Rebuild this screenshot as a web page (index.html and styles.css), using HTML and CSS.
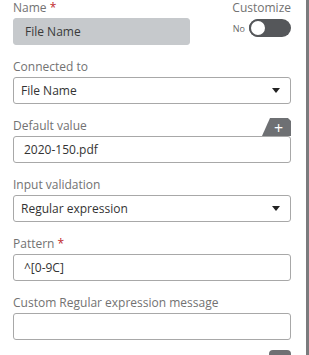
FILE: index.html
```html
<!DOCTYPE html>
<html lang="en">
<head>
  <meta charset="UTF-8" />
  <title>Field settings</title>
  <link rel="stylesheet" href="styles.css">
</head>
<body>
  <div class="panel">
    <div class="form">
      <div class="top-row">
        <div class="name-group">
          <div class="label">Name <span class="req">*</span></div>
          <div class="field field-readonly">File Name</div>
        </div>
        <div class="customize">
          <div class="label">Customize</div>
          <div class="toggle-row">
            <span class="toggle-text">No</span>
            <span class="toggle"><span class="knob"></span></span>
          </div>
        </div>
      </div>

      <div class="group">
        <div class="label">Connected to</div>
        <div class="field select">
          <span>File Name</span>
          <span class="caret"></span>
        </div>
      </div>

      <div class="group">
        <div class="label-row">
          <div class="label">Default value</div>
          <div class="tab">+</div>
        </div>
        <div class="field">2020-150.pdf</div>
      </div>

      <div class="group">
        <div class="label">Input validation</div>
        <div class="field select">
          <span>Regular expression</span>
          <span class="caret"></span>
        </div>
      </div>

      <div class="group">
        <div class="label">Pattern <span class="req">*</span></div>
        <div class="field">^[0-9C]</div>
      </div>

      <div class="group">
        <div class="label">Custom Regular expression message</div>
        <div class="field"></div>
      </div>

      <div class="bottom-row">
        <div class="tab-stub"></div>
      </div>
    </div>
    <div class="scrollbar"></div>
  </div>
</body>
</html>
```
FILE: styles.css
```css
body {
  margin: 0;
  font-family: 'Open Sans', 'Liberation Sans', sans-serif;
  font-size: 12px;
  color: #333;
  background: #fff;
  overflow: hidden;
}
.panel {
  display: flex;
  height: 355px;
}
.form {
  width: 278px;
  padding: 0 0 0 13px;
}
.scrollbar {
  margin-left: 15px;
  width: 3px;
  background: #7a7b7d;
}
.label {
  color: #727272;
  line-height: 16px;
  height: 16px;
  margin-bottom: 2px;
}
.req {
  color: #c0282d;
}
.field {
  box-sizing: border-box;
  height: 27px;
  border: 1px solid #a8a8a8;
  border-radius: 3px;
  padding: 0 10px;
  line-height: 25px;
  color: #333;
}
.group {
  margin-bottom: 14px;
}
.top-row {
  display: flex;
  justify-content: space-between;
  margin-bottom: 14px;
}
.name-group {
  width: 177px;
}
.field-readonly {
  background: #c6c9cc;
  border-color: #c6c9cc;
  padding-left: 11px;
  color: #3a3a3a;
}
.customize {
  display: flex;
  flex-direction: column;
  align-items: flex-end;
}
.toggle-row {
  display: flex;
  align-items: center;
  gap: 4px;
  margin-top: 1px;
}
.toggle-text {
  font-size: 9px;
  color: #666;
}
.toggle {
  display: flex;
  width: 42px;
  height: 18px;
  border-radius: 9px;
  background: #55575a;
}
.knob {
  box-sizing: border-box;
  width: 18px;
  height: 18px;
  border-radius: 50%;
  background: #fff;
  border: 2px solid #55575a;
}
.select {
  display: flex;
  justify-content: space-between;
  align-items: center;
  padding-left: 7px;
}
.caret {
  width: 0;
  height: 0;
  border-left: 4px solid transparent;
  border-right: 4px solid transparent;
  border-top: 5px solid #222;
  margin-right: 0;
}
.label-row {
  display: flex;
  justify-content: space-between;
  align-items: flex-end;
}
.tab {
  width: 29px;
  height: 18px;
  background: #6e7073;
  color: #fff;
  font-size: 16px;
  line-height: 20px;
  text-align: center;
  padding-left: 4px;
  box-sizing: border-box;
  clip-path: polygon(8px 0, 26px 0, 29px 3px, 29px 100%, 0 100%);
  border-top-right-radius: 3px;
}
.bottom-row {
  display: flex;
  justify-content: flex-end;
  margin-top: -4px;
}
.tab-stub {
  width: 22px;
  height: 8px;
  background: #6e7073;
  border-radius: 4px 4px 0 0;
}
```
